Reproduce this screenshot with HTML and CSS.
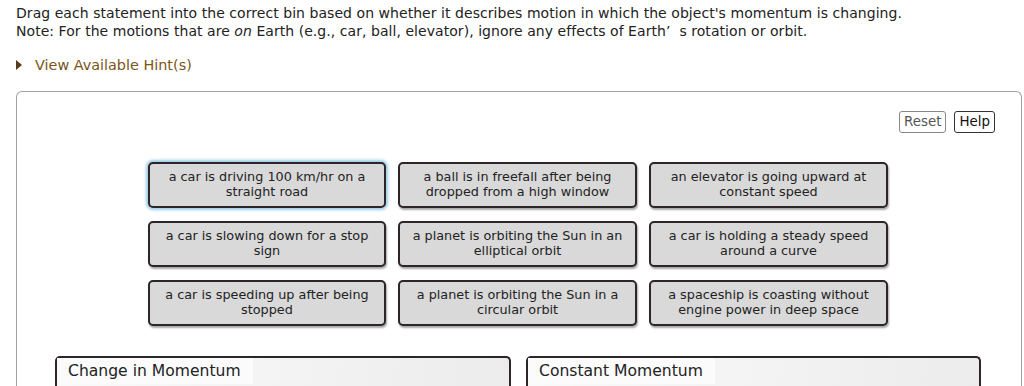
FILE: index.html
```html
<!DOCTYPE html>
<html lang="en">
<head>
    <meta charset="UTF-8">
    <title>Momentum sorting</title>
    <link rel="stylesheet" href="styles.css">
</head>
<body>
<div class="intro">
    <p>Drag each statement into the correct bin based on whether it describes motion in which the object's momentum is changing.</p>
    <p>Note: For the motions that are <em>on</em> Earth (e.g., car, ball, elevator), ignore any effects of Earth&#8217;&nbsp;&nbsp;s rotation or orbit.</p>
</div>

<div class="hint">
    <span class="arrow"></span>
    <span>View Available Hint(s)</span>
</div>

<div class="panel">
    <div class="tools">
        <span class="btn reset">Reset</span>
        <span class="btn help">Help</span>
    </div>

    <div class="cards">
        <div class="card focus">a car is driving 100 km/hr on a<br>straight road</div>
        <div class="card">a ball is in freefall after being<br>dropped from a high window</div>
        <div class="card">an elevator is going upward at<br>constant speed</div>
        <div class="card">a car is slowing down for a stop<br>sign</div>
        <div class="card">a planet is orbiting the Sun in an<br>elliptical orbit</div>
        <div class="card">a car is holding a steady speed<br>around a curve</div>
        <div class="card">a car is speeding up after being<br>stopped</div>
        <div class="card">a planet is orbiting the Sun in a<br>circular orbit</div>
        <div class="card">a spaceship is coasting without<br>engine power in deep space</div>
    </div>

    <div class="bins">
        <div class="bin bin-left"><span class="label">Change in Momentum</span></div>
        <div class="bin bin-right"><span class="label">Constant Momentum</span></div>
    </div>
</div>
</body>
</html>
```

FILE: styles.css
```css
* {
    margin: 0;
    padding: 0;
    box-sizing: border-box;
}

body {
    font-family: "DejaVu Sans", "Liberation Sans", sans-serif;
    color: #222;
    background: #fff;
    overflow: hidden;
}

.intro {
    padding: 4px 0 0 16px;
    font-size: 14px;
    line-height: 18px;
    letter-spacing: 0.05px;
}

.hint {
    display: flex;
    align-items: center;
    height: 18px;
    margin: 16px 0 0 16px;
    font-size: 14.4px;
    color: #7a5516;
}

.hint .arrow {
    width: 0;
    height: 0;
    border-top: 5px solid transparent;
    border-bottom: 5px solid transparent;
    border-left: 6px solid #5a3a1a;
    margin-right: 13px;
}

.panel {
    margin: 17px 2px 0 16px;
    height: 300px;
    border: 1px solid #a0a0a0;
    border-bottom: none;
    border-radius: 6px 6px 0 0;
}

.tools {
    display: flex;
    justify-content: flex-end;
    gap: 8px;
    padding: 19px 26px 0 0;
}

.btn {
    display: inline-block;
    height: 22px;
    padding: 0 4px;
    border: 1px solid #333;
    border-radius: 3px;
    font-size: 13.4px;
    line-height: 20px;
    color: #111;
    background: #fff;
}

.btn.reset {
    color: #555;
    border-color: #888;
}

.cards {
    display: grid;
    grid-template-columns: 238px 239px 239px;
    column-gap: 12px;
    row-gap: 13px;
    margin: 29px 0 0 131px;
}

.card {
    height: 46px;
    padding-top: 5px;
    background: #d9d9d9;
    border: 2px solid #2e2626;
    border-radius: 5px;
    box-shadow: 1px 2px 2px rgba(0, 0, 0, 0.35);
    font-size: 12.8px;
    line-height: 15px;
    text-align: center;
}

.card.focus {
    box-shadow: 0 0 3px 2px #9ccbea;
}

.bins {
    display: flex;
    gap: 15px;
    margin: 30px 0 0 38px;
}

.bin {
    height: 40px;
    border: 2px solid #2e2626;
    border-bottom: none;
    border-radius: 5px 5px 0 0;
    background: linear-gradient(100deg, #fafafa 0%, #f3f3f3 50%, #ececec 100%);
}

.bin-left {
    width: 456px;
}

.bin-right {
    width: 455px;
}

.bin .label {
    display: inline-block;
    padding: 4px 12px 4px 11px;
    background: #fbfbfb;
    font-size: 15.6px;
    color: #222;
}
```
